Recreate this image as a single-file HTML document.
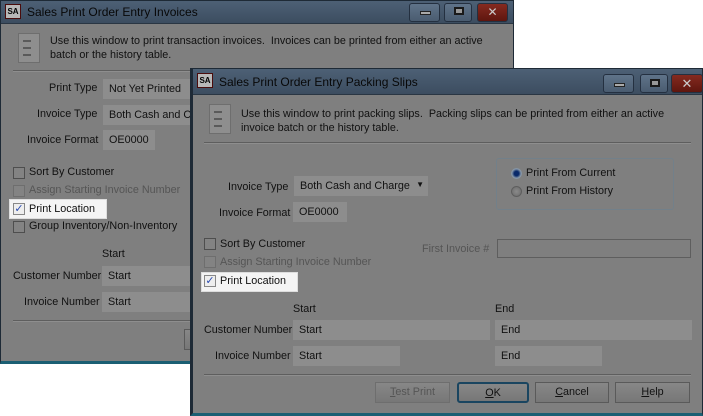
<!DOCTYPE html><html><head><style>
*{margin:0;padding:0;box-sizing:border-box}
body{width:703px;height:416px;background:#fff;position:relative;overflow:hidden;font-family:"Liberation Sans","DejaVu Sans",sans-serif;font-size:10.8px;color:#111}
.a{position:absolute;white-space:nowrap}
.win{position:absolute;background:#7f7f7f;border:1px solid #1e2a36}
.tb{position:absolute;left:0;right:0;top:0;height:26px;background:linear-gradient(#4d6075,#3c4d60);border-bottom:1px solid #2a3643}
.tt{position:absolute;top:6px;left:26px;font-size:12px;color:#080808 !important}
.sa{position:absolute;left:4px;top:4px;width:16px;height:15px;background:#b8b8b8;border:1px solid #4a0c0c;font-size:8px;font-weight:bold;color:#000;text-align:center;line-height:13px}
.bt{position:absolute;top:5px;height:19px;border:1px solid #243040;border-radius:3px;background:linear-gradient(#5f7389,#4a5c70)}
.cl{background:linear-gradient(#852a20,#5e160f)}
.f{position:absolute;background:#8d8d8d;height:20px;padding:4px 6px;white-space:nowrap;overflow:hidden}
.cb{position:absolute;width:12px;height:12px;border:1px solid #4e4e4e;background:#838383}
.sep{position:absolute;height:2px;background:#5e5e5e;border-bottom:1px solid #8e8e8e}
.hl{position:absolute;background:#f4f4f4;border:1px solid #ddd}
.btn{position:absolute;height:21px;border:1px solid #5a5a5a;background:linear-gradient(#878787,#777);text-align:center;line-height:19px}
.doc{position:absolute;width:22px;height:30px;background:#8e8e8e;border:1px solid #6e6e6e}
.doc i{position:absolute;left:4px;height:2px;width:8px;background:#5a5a5a}
.mn{position:absolute;left:10px;top:8px;width:11px;height:4px;background:#aaa;border:1px solid #222}
.mx{position:absolute;left:9px;top:4px;width:10px;height:8px;border:2px solid #1a1a1a;background:#999}
</style></head><body>

<!-- back window -->
<div class="win" style="left:0;top:0;width:514px;height:364px;border-bottom:3px solid #1b5f73">
<div class="tb" style="height:23px"><div class="sa" style="top:3px">SA</div><div class="tt" style="top:4px">Sales Print Order Entry Invoices</div>
<div class="bt" style="left:408px;top:2px;width:31px"><div class="mn" style="top:7px"></div></div><div class="bt" style="left:443px;top:2px;width:28px"><div class="mx" style="top:3px"></div></div><div class="bt cl" style="left:476px;top:2px;width:31px;color:#ccc;font-weight:bold;text-align:center;line-height:17px;font-size:12px">✕</div></div>
<div class="doc" style="left:17px;top:32px"><i style="top:6px"></i><i style="top:13px"></i><i style="top:20px"></i></div>
<div class="a" style="left:49px;top:33px;line-height:14px">Use this window to print transaction invoices.&nbsp; Invoices can be printed from either an active<br>batch or the history table.</div>
<div class="sep" style="left:12px;top:69px;width:495px"></div>
<div class="a" style="left:48px;top:81px">Print Type</div><div class="f" style="left:102px;top:78px;width:100px">Not Yet Printed</div>
<div class="a" style="left:36px;top:107px">Invoice Type</div><div class="f" style="left:102px;top:104px;width:100px">Both Cash and Charge</div>
<div class="a" style="left:26px;top:133px">Invoice Format</div><div class="f" style="left:102px;top:129px;width:52px">OE0000</div>
<div class="cb" style="left:12px;top:166px"></div><div class="a" style="left:28px;top:165px">Sort By Customer</div>
<div class="cb" style="left:12px;top:184px;border-color:#6e6e6e"></div><div class="a" style="left:28px;top:183px;color:#555">Assign Starting Invoice Number</div>
<div class="hl" style="left:8px;top:198px;width:98px;height:20px"></div>
<div class="cb" style="left:12px;top:202px;background:#eee;border-color:#888;color:#2a4bb0;font-size:11px;line-height:10px;text-align:center">✓</div><div class="a" style="left:28px;top:202px">Print Location</div>
<div class="cb" style="left:12px;top:220px"></div><div class="a" style="left:28px;top:219px">Group Inventory/Non-Inventory</div>
<div class="a" style="left:101px;top:247px">Start</div>
<div class="a" style="left:12px;top:269px">Customer Number</div><div class="f" style="left:101px;top:265px;width:100px">Start</div>
<div class="a" style="left:23px;top:295px">Invoice Number</div><div class="f" style="left:101px;top:291px;width:100px">Start</div>
<div class="sep" style="left:12px;top:319px;width:495px"></div>
<div class="btn" style="left:183px;top:328px;width:60px"></div>
</div>

<!-- front window -->
<div class="win" style="left:190px;top:68px;width:513px;height:348px;border-left:3px solid #1e2a36;border-bottom:3px solid #1b5f73">
<div class="tb"><div class="sa">SA</div><div class="tt">Sales Print Order Entry Packing Slips</div>
<div class="bt" style="left:410px;width:31px"><div class="mn"></div></div>
<div class="bt" style="left:447px;width:28px"><div class="mx"></div></div>
<div class="bt cl" style="left:478px;width:32px;color:#ccc;font-weight:bold;text-align:center;line-height:17px;font-size:13px">✕</div></div>
<div class="doc" style="left:16px;top:35px"><i style="top:6px"></i><i style="top:13px"></i><i style="top:20px"></i></div>
<div class="a" style="left:48px;top:38px;line-height:14px">Use this window to print packing slips.&nbsp; Packing slips can be printed from either an active<br>invoice batch or the history table.</div>
<div class="sep" style="left:11px;top:73px;width:487px"></div>
<div style="position:absolute;left:303px;top:89px;width:178px;height:52px;border:1px solid #72808a;border-radius:3px"></div>
<div class="a" style="left:318px;top:99px;width:11px;height:11px;border-radius:50%;background:radial-gradient(#0a2a6a 30%,#8a9aaa 60%,#666)"></div><div class="a" style="left:333px;top:98px">Print From Current</div>
<div class="a" style="left:318px;top:117px;width:11px;height:11px;border-radius:50%;background:radial-gradient(#8a8a8a,#6a6a6a);border:1px solid #5e5e5e"></div><div class="a" style="left:333px;top:116px">Print From History</div>
<div class="a" style="left:35px;top:112px">Invoice Type</div><div class="f" style="left:101px;top:107px;width:134px">Both Cash and Charge<span style="position:absolute;right:4px;top:4px;font-size:8px">▼</span></div>
<div class="a" style="left:26px;top:138px">Invoice Format</div><div class="f" style="left:100px;top:133px;width:54px">OE0000</div>
<div class="cb" style="left:11px;top:169px"></div><div class="a" style="left:27px;top:169px">Sort By Customer</div>
<div class="a" style="left:229px;top:174px;color:#555">First Invoice #</div>
<div style="position:absolute;left:304px;top:170px;width:194px;height:19px;border:1px solid #5e5e5e;background:#7f7f7f"></div>
<div class="cb" style="left:11px;top:187px;border-color:#6e6e6e"></div><div class="a" style="left:27px;top:187px;color:#555">Assign Starting Invoice Number</div>
<div class="hl" style="left:8px;top:203px;width:97px;height:20px"></div>
<div class="cb" style="left:11px;top:206px;background:#eee;border-color:#888;color:#2a4bb0;font-size:11px;line-height:10px;text-align:center">✓</div><div class="a" style="left:27px;top:206px">Print Location</div>
<div class="a" style="left:100px;top:234px">Start</div><div class="a" style="left:302px;top:234px">End</div>
<div class="a" style="left:11px;top:255px">Customer Number</div><div class="f" style="left:100px;top:251px;width:197px">Start</div><div class="f" style="left:302px;top:251px;width:197px">End</div>
<div class="a" style="left:22px;top:281px">Invoice Number</div><div class="f" style="left:100px;top:277px;width:107px">Start</div><div class="f" style="left:302px;top:277px;width:107px">End</div>
<div class="sep" style="left:11px;top:305px;width:487px"></div>
<div class="btn" style="left:182px;top:313px;width:75px;color:#555;border-color:#6e6e6e"><u>T</u>est Print</div>
<div class="btn" style="left:264px;top:313px;width:72px;border:2px solid #1a4560;border-radius:3px"><u>O</u>K</div>
<div class="btn" style="left:342px;top:313px;width:74px"><u>C</u>ancel</div>
<div class="btn" style="left:422px;top:313px;width:75px"><u>H</u>elp</div>
</div>
</body></html>
